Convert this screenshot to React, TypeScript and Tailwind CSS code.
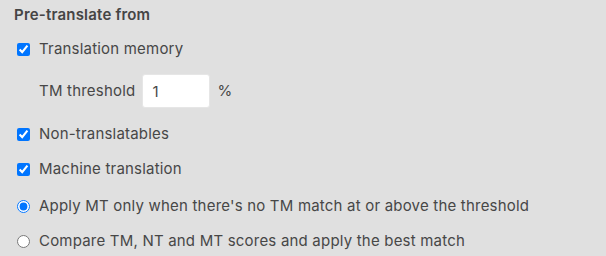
import React from "react";

export default function App() {
  return (
    <div className="w-[606px] h-[256px] bg-[#e0e0e0] pl-[14px] pt-[1px] text-[15px] tracking-[0.2px] text-[#474747] overflow-hidden" style={{ fontFamily: "Inter, 'Noto Sans', sans-serif" }}>
      <div className="h-[28px] flex items-center font-semibold text-[#454545]">Pre-translate from</div>
      <label className="h-[40px] flex items-center">
        <input type="checkbox" defaultChecked className="m-0 ml-[3px] w-[13px] h-[13px]" />
        <span className="ml-[9px]">Translation memory</span>
      </label>
      <div className="h-[44px] flex items-center pl-[25px]">
        <span>TM threshold</span>
        <input type="text" defaultValue="1" className="ml-[7px] w-[68px] h-[34px] bg-white rounded-[3px] border border-[#e6e6e6] pl-[9px] outline-none text-[#474747]" />
        <span className="ml-[7px]">%</span>
      </div>
      <label className="h-[42px] flex items-center">
        <input type="checkbox" defaultChecked className="m-0 ml-[3px] w-[13px] h-[13px]" />
        <span className="ml-[9px]">Non-translatables</span>
      </label>
      <label className="h-[28px] flex items-center">
        <input type="checkbox" defaultChecked className="m-0 ml-[3px] w-[13px] h-[13px]" />
        <span className="ml-[9px]">Machine translation</span>
      </label>
      <label className="h-[46px] flex items-center">
        <input type="radio" name="mt" defaultChecked className="m-0 ml-[3px] w-[13px] h-[13px]" />
        <span className="ml-[9px]">Apply MT only when there's no TM match at or above the threshold</span>
      </label>
      <label className="h-[24px] flex items-center">
        <input type="radio" name="mt" className="m-0 ml-[3px] w-[13px] h-[13px]" />
        <span className="ml-[9px]">Compare TM, NT and MT scores and apply the best match</span>
      </label>
    </div>
  );
}
